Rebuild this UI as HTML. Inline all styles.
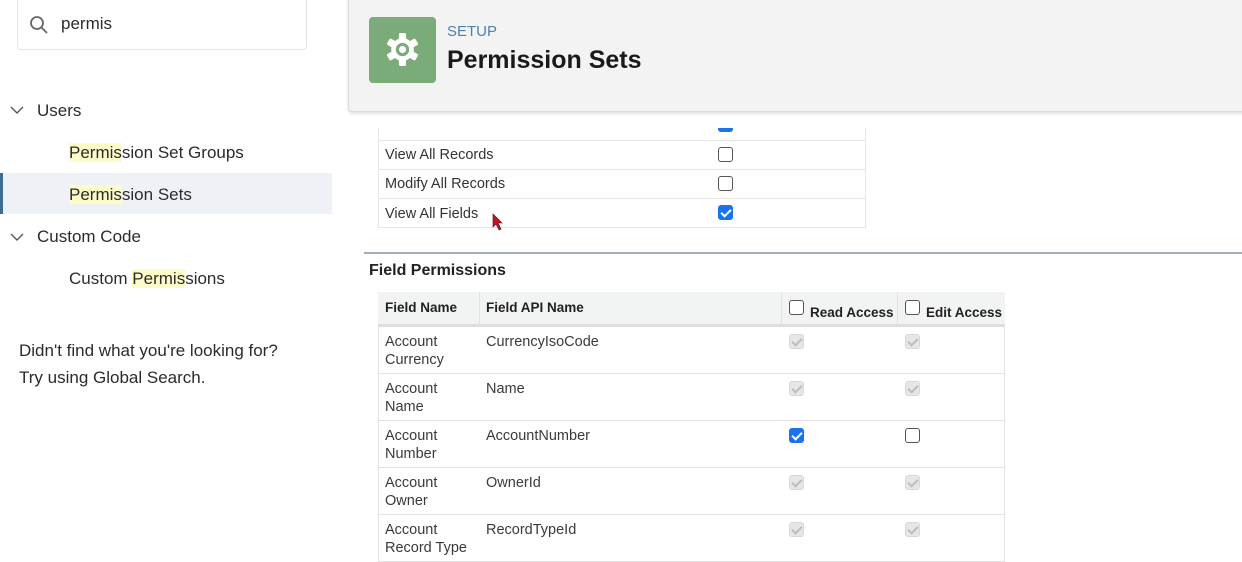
<!DOCTYPE html>
<html><head><style>
*{margin:0;padding:0;box-sizing:border-box}
body{width:1242px;height:562px;overflow:hidden;background:#fff;font-family:"Liberation Sans",sans-serif;position:relative}
.abs{position:absolute}
.side{font-size:17px;color:#2b2b2b}
.hl{background:#fdfbc8}
.cb{position:absolute;width:15px;height:15px;border:1.5px solid #555;border-radius:3px;background:#fff}
.cb.on{background:#1a73e8;border-color:#1a73e8}
.cb.on:after{content:"";position:absolute;left:4px;top:1px;width:4px;height:8px;border:solid #fff;border-width:0 2px 2px 0;transform:rotate(45deg)}
.cb.dis{background:#e6e6e6;border-color:#d8d8d8}
.cb.dis:after{content:"";position:absolute;left:4px;top:1px;width:4px;height:8px;border:solid #bdbdbd;border-width:0 2px 2px 0;transform:rotate(45deg)}
.t{font-size:14.5px;color:#333}
.row{position:absolute;left:378px;width:627px;height:47px;border-bottom:1px solid #e3e3e3}
.row div{position:absolute;top:6px;font-size:14.5px;color:#3a3a3a;line-height:18px}
</style></head><body>
<div class="abs" style="left:17px;top:-10px;width:290px;height:60px;border:1px solid #e5e5e5;border-radius:4px"></div>
<svg class="abs" style="left:29px;top:15px" width="20" height="20" viewBox="0 0 20 20"><circle cx="8" cy="8" r="6" fill="none" stroke="#666" stroke-width="1.8"/><line x1="12.5" y1="12.5" x2="18" y2="18" stroke="#666" stroke-width="1.8"/></svg>
<div class="abs side" style="left:61px;top:14px">permis</div>
<svg class="abs" style="left:10px;top:105px" width="14" height="10"><polyline points="1,2 7,8 13,2" fill="none" stroke="#555" stroke-width="1.4"/></svg>
<div class="abs side" style="left:37px;top:101px">Users</div>
<div class="abs side" style="left:69px;top:143px"><span class="hl">Permis</span>sion Set Groups</div>
<div class="abs" style="left:0;top:173px;width:332px;height:41px;background:#eef2f7;border-left:3px solid #3d6c99"></div>
<div class="abs side" style="left:69px;top:185px"><span class="hl">Permis</span>sion Sets</div>
<svg class="abs" style="left:10px;top:232px" width="14" height="10"><polyline points="1,2 7,8 13,2" fill="none" stroke="#555" stroke-width="1.4"/></svg>
<div class="abs side" style="left:37px;top:227px">Custom Code</div>
<div class="abs side" style="left:69px;top:269px">Custom <span class="hl">Permis</span>sions</div>
<div class="abs side" style="left:19px;top:337px;line-height:27px">Didn't find what you're looking for?<br>Try using Global Search.</div>
<div class="abs" style="left:348px;top:-5px;width:900px;height:117px;background:#f3f3f3;border:1px solid #dcdcdc;border-radius:4px;box-shadow:0 2px 3px rgba(0,0,0,.12)"></div>
<div class="abs" style="left:369px;top:17px;width:67px;height:66px;background:#7aab79;border-radius:4px"></div>
<svg class="abs" style="left:384px;top:31px" width="37" height="37" viewBox="-18 -18 36 36"><g fill="#fff"><circle r="11"/><g id="tt"><rect x="-3.5" y="-16" width="7" height="7" rx="1.5"/></g><use href="#tt" transform="rotate(60)"/><use href="#tt" transform="rotate(120)"/><use href="#tt" transform="rotate(180)"/><use href="#tt" transform="rotate(240)"/><use href="#tt" transform="rotate(300)"/></g><circle r="6.5" fill="#7aab79"/><circle r="3.5" fill="#fff"/></svg>
<div class="abs" style="left:447px;top:23px;font-size:15px;color:#4f7fae">SETUP</div>
<div class="abs" style="left:447px;top:46px;font-size:25px;font-weight:bold;color:#1a1a1a">Permission Sets</div>
<div class="abs" style="left:378px;top:128px;width:488px;height:100px;border:1px solid #e6e6e6;border-top:none"></div>
<div class="abs" style="left:379px;top:140px;width:486px;border-top:1px solid #e6e6e6"></div>
<div class="abs" style="left:379px;top:169px;width:486px;border-top:1px solid #e6e6e6"></div>
<div class="abs" style="left:379px;top:198px;width:486px;border-top:1px solid #e6e6e6"></div>
<div class="abs" style="left:718px;top:128px;width:15px;height:4px;background:#1a73e8;border-radius:0 0 3px 3px"></div>
<div class="abs t" style="left:385px;top:147px">View All Records</div>
<div class="abs t" style="left:385px;top:176px">Modify All Records</div>
<div class="abs t" style="left:385px;top:206px">View All Fields</div>
<div class="cb" style="left:718px;top:147px"></div>
<div class="cb" style="left:718px;top:176px"></div>
<div class="cb on" style="left:718px;top:205px"></div>
<svg class="abs" style="left:492px;top:213px" width="12" height="18"><path d="M1 1 L1 14 L4 11 L7 17 L9 16 L6 10 L10 10 Z" fill="#c0162b" stroke="#600" stroke-width=".6"/></svg>
<div class="abs" style="left:364px;top:252px;width:878px;height:2px;background:#a5abc2"></div>
<div class="abs" style="left:369px;top:262px;font-size:16px;font-weight:bold;color:#222">Field Permissions</div>
<div class="abs" style="left:378px;top:292px;width:627px;height:270px;border:1px solid #e3e3e3"></div>
<div class="abs" style="left:378px;top:292px;width:627px;height:35px;background:#f2f3f3;border-bottom:3px solid #dedede"></div>
<div class="abs" style="left:479px;top:292px;width:1px;height:35px;background:#e3e3e3"></div>
<div class="abs" style="left:781px;top:292px;width:1px;height:35px;background:#e3e3e3"></div>
<div class="abs" style="left:897px;top:292px;width:1px;height:35px;background:#e3e3e3"></div>
<div class="abs" style="left:385px;top:300px;font-size:13.5px;font-weight:bold;color:#222">Field Name</div>
<div class="abs" style="left:486px;top:300px;font-size:13.5px;font-weight:bold;color:#222">Field API Name</div>
<div class="cb" style="left:789px;top:300px;background:#fff"></div>
<div class="abs" style="left:810px;top:305px;font-size:13.5px;font-weight:bold;color:#222">Read Access</div>
<div class="cb" style="left:905px;top:300px;background:#fff"></div>
<div class="abs" style="left:926px;top:305px;font-size:13.5px;font-weight:bold;color:#222">Edit Access</div>
<div class="row" style="top:327px"><div style="left:7px">Account<br>Currency</div><div style="left:108px">CurrencyIsoCode</div></div>
<div class="row" style="top:374px"><div style="left:7px">Account<br>Name</div><div style="left:108px">Name</div></div>
<div class="row" style="top:421px"><div style="left:7px">Account<br>Number</div><div style="left:108px">AccountNumber</div></div>
<div class="row" style="top:468px"><div style="left:7px">Account<br>Owner</div><div style="left:108px">OwnerId</div></div>
<div class="row" style="top:515px;border:none"><div style="left:7px">Account<br>Record Type</div><div style="left:108px">RecordTypeId</div></div>
<div class="cb dis" style="left:789px;top:334px"></div><div class="cb dis" style="left:905px;top:334px"></div>
<div class="cb dis" style="left:789px;top:381px"></div><div class="cb dis" style="left:905px;top:381px"></div>
<div class="cb on" style="left:789px;top:428px"></div><div class="cb" style="left:905px;top:428px"></div>
<div class="cb dis" style="left:789px;top:475px"></div><div class="cb dis" style="left:905px;top:475px"></div>
<div class="cb dis" style="left:789px;top:522px"></div><div class="cb dis" style="left:905px;top:522px"></div>
</body></html>
